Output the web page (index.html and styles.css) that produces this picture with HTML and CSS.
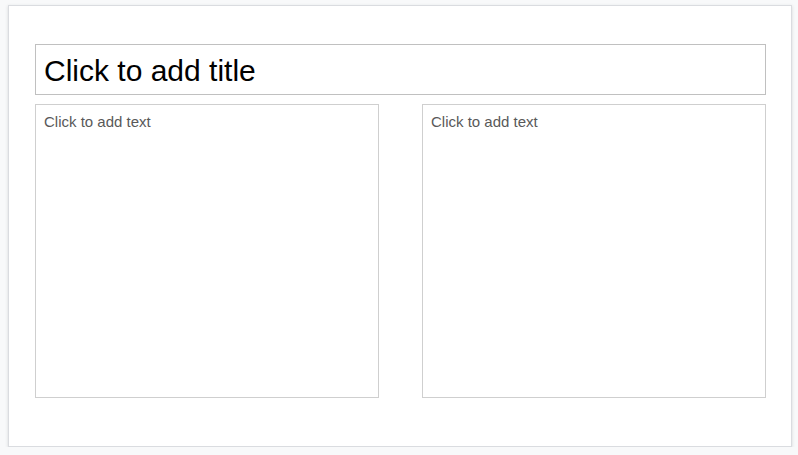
FILE: index.html
```html
<!DOCTYPE html>
<html>
<head>
<meta charset="utf-8">
<link rel="stylesheet" href="styles.css">
</head>
<body>
<div class="slide">
  <div class="title-box"><span class="title-text">Click to add title</span></div>
  <div class="columns">
    <div class="text-box"><span class="body-text">Click to add text</span></div>
    <div class="text-box"><span class="body-text">Click to add text</span></div>
  </div>
</div>
</body>
</html>
```
FILE: styles.css
```css
html, body {
  margin: 0;
  padding: 0;
  background: #f8f9fa;
  font-family: "Liberation Sans", Arial, sans-serif;
}
body {
  padding: 5px 0 0 8px;
}
.slide {
  box-sizing: border-box;
  width: 784px;
  height: 442px;
  background: #ffffff;
  border: 1px solid #dadce0;
  box-shadow: 0 1px 3px rgba(60, 64, 67, 0.18);
  padding: 38px 25px 0 26px;
  display: flex;
  flex-direction: column;
  gap: 9px;
}
.title-box {
  box-sizing: border-box;
  height: 51px;
  border: 1px solid #c0c0c0;
  padding: 0 8px;
  display: flex;
  align-items: center;
}
.title-text {
  font-size: 30px;
  color: #000000;
  line-height: 34px;
  padding-top: 3px;
}
.columns {
  display: flex;
  gap: 43px;
}
.text-box {
  box-sizing: border-box;
  width: 344px;
  height: 294px;
  border: 1px solid #cfcfcf;
  padding: 8px 8px;
}
.body-text {
  font-size: 15px;
  color: #595959;
}
```
